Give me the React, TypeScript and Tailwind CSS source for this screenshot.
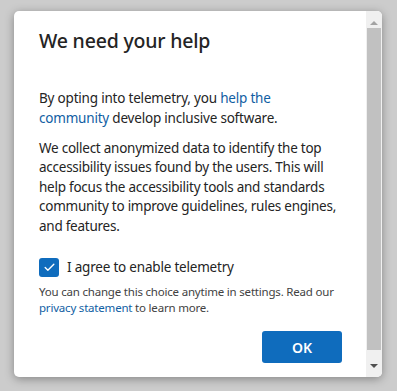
import { Check } from 'lucide-react';

const FONT = "font-['Segoe_UI','Noto_Sans','Open_Sans',sans-serif]";

function Scrollbar() {
  return (
    <div className='flex w-[16px] shrink-0 flex-col bg-[#f0f0f0]'>
      <div className='flex h-[17px] items-end justify-center pb-[3px]'>
        <div className='h-0 w-0 border-x-[4px] border-b-[4px] border-x-transparent border-b-[#a3a3a3]' />
      </div>
      <div className='mx-[1px] flex-1 bg-[#c1c1c1]' />
      <div className='flex h-[27px] items-center justify-center pt-[4px]'>
        <div className='h-0 w-0 border-x-[4px] border-t-[4px] border-x-transparent border-t-[#505050]' />
      </div>
    </div>
  );
}

export default function App() {
  return (
    <div className={`h-[391px] w-[397px] bg-[#cccccc] pl-[14px] pt-[11px] ${FONT}`}>
      <div className='flex h-[366px] w-[368px] overflow-hidden rounded-[5px] bg-white shadow-[0_2px_10px_rgba(0,0,0,0.35)]'>
        <div className='flex flex-1 flex-col pl-[25px] pr-[24px] pt-[16px] text-[#242424]'>
          <h1 className='text-[19.5px] font-medium leading-[28px] tracking-[-0.2px]'>We need your help</h1>
          <p className='mt-[33px] text-[13.5px] leading-[20px] tracking-[-0.2px]'>
            By opting into telemetry, you <span className='text-[#115ea3]'>help the</span>
            <br />
            <span className='text-[#115ea3]'>community</span> develop inclusive software.
          </p>
          <p className='mt-[11px] text-[13.5px] leading-[19.4px] tracking-[-0.25px]'>
            We collect anonymized data to identify the top accessibility issues found by the users. This will help
            focus the accessibility tools and standards community to improve guidelines, rules engines, and features.
          </p>
          <label className='mt-[21px] flex items-center gap-[8px]'>
            <span className='flex h-[19px] w-[20px] items-center justify-center rounded-[3px] bg-[#0f6cbd]'>
              <Check size={13} strokeWidth={2.5} color='white' />
            </span>
            <span className='text-[13.5px] leading-[20px] tracking-[-0.2px]'>I agree to enable telemetry</span>
          </label>
          <p className='mt-[7px] text-[11.5px] leading-[16px] tracking-[-0.2px] text-[#424242]'>
            You can change this choice anytime in settings. Read our{' '}
            <span className='text-[#115ea3]'>privacy statement</span> to learn more.
          </p>
          <div className='mt-[15px] flex justify-end'>
            <button className='h-[32px] w-[80px] rounded-[3px] bg-[#0f6cbd] text-[14px] font-semibold text-white'>
              OK
            </button>
          </div>
        </div>
        <Scrollbar />
      </div>
    </div>
  );
}
